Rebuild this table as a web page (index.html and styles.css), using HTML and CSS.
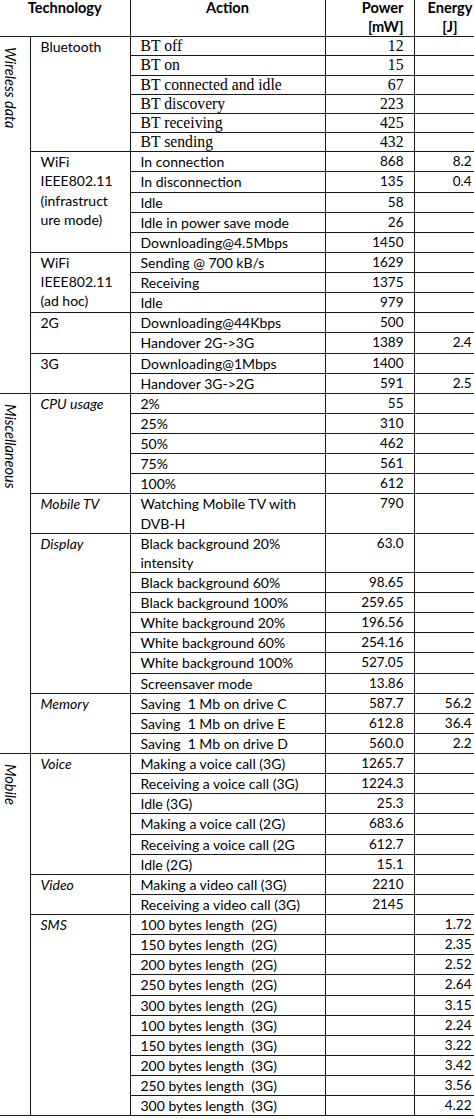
FILE: index.html
```html
<!DOCTYPE html>
<html lang="en">
<head>
<meta charset="utf-8">
<title>Energy consumption table</title>
<link rel="stylesheet" href="styles.css">
</head>
<body>
<div class="page">
<table class="energy">
  <colgroup>
    <col class="c-cat">
    <col class="c-tech">
    <col class="c-act">
    <col class="c-pow">
    <col class="c-en">
  </colgroup>
  <thead>
    <tr>
      <th colspan="2" class="h-center">Technology<br>&nbsp;</th>
      <th class="h-center">Action<br>&nbsp;</th>
      <th class="h-right">Power<br>[mW]</th>
      <th class="h-center h-en">Energy<br>[J]</th>
    </tr>
  </thead>
  <tbody>
    <tr>
      <td rowspan="18" class="cat"><div class="vt">Wireless data</div></td>
      <td rowspan="6" class="tech">Bluetooth</td>
      <td class="serif">BT off</td><td class="num serif">12</td><td class="en"></td>
    </tr>
    <tr><td class="serif">BT on</td><td class="num serif">15</td><td class="en"></td></tr>
    <tr><td class="serif">BT connected and idle</td><td class="num serif">67</td><td class="en"></td></tr>
    <tr><td class="serif">BT discovery</td><td class="num serif">223</td><td class="en"></td></tr>
    <tr><td class="serif">BT receiving</td><td class="num serif">425</td><td class="en"></td></tr>
    <tr><td class="serif">BT sending</td><td class="num serif">432</td><td class="en"></td></tr>
    <tr>
      <td rowspan="5" class="tech">WiFi<br>IEEE802.11<br>(infrastruct<br>ure mode)</td>
      <td>In connection</td><td class="num">868</td><td class="en">8.2</td>
    </tr>
    <tr><td>In disconnection</td><td class="num">135</td><td class="en">0.4</td></tr>
    <tr><td>Idle</td><td class="num">58</td><td class="en"></td></tr>
    <tr><td>Idle in power save mode</td><td class="num">26</td><td class="en"></td></tr>
    <tr><td>Downloading@4.5Mbps</td><td class="num">1450</td><td class="en"></td></tr>
    <tr>
      <td rowspan="3" class="tech">WiFi<br>IEEE802.11<br>(ad hoc)</td>
      <td>Sending @ 700 kB/s</td><td class="num">1629</td><td class="en"></td>
    </tr>
    <tr><td>Receiving</td><td class="num">1375</td><td class="en"></td></tr>
    <tr><td>Idle</td><td class="num">979</td><td class="en"></td></tr>
    <tr>
      <td rowspan="2" class="tech">2G</td>
      <td>Downloading@44Kbps</td><td class="num">500</td><td class="en"></td>
    </tr>
    <tr><td>Handover 2G-&gt;3G</td><td class="num">1389</td><td class="en">2.4</td></tr>
    <tr>
      <td rowspan="2" class="tech">3G</td>
      <td>Downloading@1Mbps</td><td class="num">1400</td><td class="en"></td>
    </tr>
    <tr><td>Handover 3G-&gt;2G</td><td class="num">591</td><td class="en">2.5</td></tr>

    <tr>
      <td rowspan="16" class="cat"><div class="vt">Miscellaneous</div></td>
      <td rowspan="5" class="tech it">CPU usage</td>
      <td>2%</td><td class="num">55</td><td class="en"></td>
    </tr>
    <tr><td>25%</td><td class="num">310</td><td class="en"></td></tr>
    <tr><td>50%</td><td class="num">462</td><td class="en"></td></tr>
    <tr><td>75%</td><td class="num">561</td><td class="en"></td></tr>
    <tr><td>100%</td><td class="num">612</td><td class="en"></td></tr>
    <tr>
      <td class="tech it">Mobile TV</td>
      <td>Watching Mobile TV with<br>DVB-H</td><td class="num">790</td><td class="en"></td>
    </tr>
    <tr>
      <td rowspan="7" class="tech it">Display</td>
      <td>Black background 20%<br>intensity</td><td class="num">63.0</td><td class="en"></td>
    </tr>
    <tr><td>Black background 60%</td><td class="num">98.65</td><td class="en"></td></tr>
    <tr><td>Black background 100%</td><td class="num">259.65</td><td class="en"></td></tr>
    <tr><td>White background 20%</td><td class="num">196.56</td><td class="en"></td></tr>
    <tr><td>White background 60%</td><td class="num">254.16</td><td class="en"></td></tr>
    <tr><td>White background 100%</td><td class="num">527.05</td><td class="en"></td></tr>
    <tr><td>Screensaver mode</td><td class="num">13.86</td><td class="en"></td></tr>
    <tr>
      <td rowspan="3" class="tech it">Memory</td>
      <td>Saving&nbsp; 1 Mb on drive C</td><td class="num">587.7</td><td class="en">56.2</td>
    </tr>
    <tr><td>Saving&nbsp; 1 Mb on drive E</td><td class="num">612.8</td><td class="en">36.4</td></tr>
    <tr><td>Saving&nbsp; 1 Mb on drive D</td><td class="num">560.0</td><td class="en">2.2</td></tr>

    <tr>
      <td rowspan="18" class="cat"><div class="vt">Mobile</div></td>
      <td rowspan="6" class="tech it">Voice</td>
      <td>Making a voice call (3G)</td><td class="num">1265.7</td><td class="en"></td>
    </tr>
    <tr><td>Receiving a voice call (3G)</td><td class="num">1224.3</td><td class="en"></td></tr>
    <tr><td>Idle (3G)</td><td class="num">25.3</td><td class="en"></td></tr>
    <tr><td>Making a voice call (2G)</td><td class="num">683.6</td><td class="en"></td></tr>
    <tr><td>Receiving a voice call (2G</td><td class="num">612.7</td><td class="en"></td></tr>
    <tr><td>Idle (2G)</td><td class="num">15.1</td><td class="en"></td></tr>
    <tr>
      <td rowspan="2" class="tech it">Video</td>
      <td>Making a video call (3G)</td><td class="num">2210</td><td class="en"></td>
    </tr>
    <tr><td>Receiving a video call (3G)</td><td class="num">2145</td><td class="en"></td></tr>
    <tr>
      <td rowspan="10" class="tech it">SMS</td>
      <td>100 bytes length&nbsp; (2G)</td><td class="num"></td><td class="en">1.72</td>
    </tr>
    <tr><td>150 bytes length&nbsp; (2G)</td><td class="num"></td><td class="en">2.35</td></tr>
    <tr><td>200 bytes length&nbsp; (2G)</td><td class="num"></td><td class="en">2.52</td></tr>
    <tr><td>250 bytes length&nbsp; (2G)</td><td class="num"></td><td class="en">2.64</td></tr>
    <tr><td>300 bytes length&nbsp; (2G)</td><td class="num"></td><td class="en">3.15</td></tr>
    <tr><td>100 bytes length&nbsp; (3G)</td><td class="num"></td><td class="en">2.24</td></tr>
    <tr><td>150 bytes length&nbsp; (3G)</td><td class="num"></td><td class="en">3.22</td></tr>
    <tr><td>200 bytes length&nbsp; (3G)</td><td class="num"></td><td class="en">3.42</td></tr>
    <tr><td>250 bytes length&nbsp; (3G)</td><td class="num"></td><td class="en">3.56</td></tr>
    <tr><td>300 bytes length&nbsp; (3G)</td><td class="num"></td><td class="en">4.22</td></tr>
  </tbody>
</table>
</div>
</body>
</html>
```

FILE: styles.css
```css
html, body {
  margin: 0;
  padding: 0;
  background: #ffffff;
}

.page {
  width: 474px;
  height: 1119px;
  overflow: hidden;
}

.energy {
  border-collapse: collapse;
  table-layout: fixed;
  width: 486px;
  margin-top: -2px;
  font-family: Lato, "Liberation Sans", sans-serif;
  font-size: 14px;
  line-height: 19.13px;
  color: #000;
}

.c-cat { width: 30px; }
.c-tech { width: 100px; }
.c-act { width: 195px; }
.c-pow { width: 89px; }
.c-en { width: 72px; }

.energy th,
.energy td {
  border: 1px solid #1a1a1a;
  padding: 0 10px;
  vertical-align: top;
  text-align: left;
  white-space: nowrap;
}

.energy th {
  font-weight: 700;
  font-size: 14.6px;
  border-top-style: hidden;
}

.energy th:first-child,
.energy td.cat {
  border-left-style: hidden;
}

.energy .h-center { text-align: center; }
.energy .h-right { text-align: right; }
.energy .h-en { padding: 0 4px; }

.energy td.num {
  text-align: right;
  font-size: 13.5px;
}

.energy td.en {
  text-align: right;
  font-size: 13.5px;
  padding-right: 14px;
}

.energy td.serif {
  font-family: "Liberation Serif", "Times New Roman", serif;
  font-size: 15.7px;
  line-height: 18.17px;
}

.energy td.it { font-style: italic; }

.energy td.cat {
  padding: 0;
}

.vt {
  writing-mode: vertical-rl;
  font-style: italic;
  font-size: 14.5px;
  padding-top: 10px;
  padding-left: 1px;
}
```
